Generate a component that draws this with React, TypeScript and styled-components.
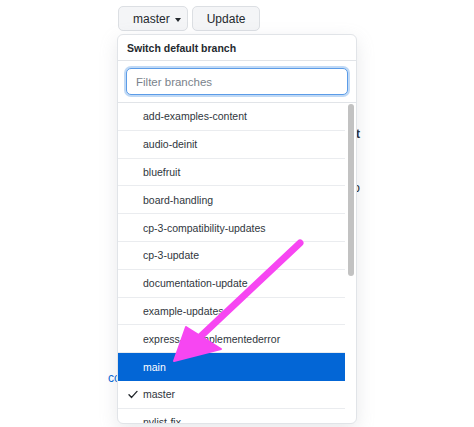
import React from "react";
import styled, { createGlobalStyle } from "styled-components";

const GlobalStyle = createGlobalStyle`
  html, body {
    margin: 0;
    padding: 0;
    background: #ffffff;
    font-family: "Liberation Sans", Arial, Helvetica, sans-serif;
    color: #24292e;
  }
  * { box-sizing: border-box; }
`;

const Page = styled.div`
  position: relative;
  width: 474px;
  height: 427px;
  overflow: hidden;
  padding-top: 6px;
  display: flex;
  flex-direction: column;
`;

const Toolbar = styled.div`
  position: relative;
  display: flex;
  gap: 4px;
  padding-left: 118px;
  z-index: 2;
`;

const MenuAnchor = styled.div`
  position: relative;
`;

const Button = styled.button`
  height: 25px;
  padding: 0 ${(p: { $right?: number }) => p.$right ?? 14}px 0 14px;
  display: inline-flex;
  align-items: center;
  gap: 5px;
  font-family: inherit;
  font-size: 12px;
  color: #24292e;
  background: #f4f5f7;
  border: 1px solid #dcdfe3;
  border-radius: 5px;
`;

const Caret = styled.span`
  width: 0;
  height: 0;
  margin-top: 2px;
  border-left: 3.5px solid transparent;
  border-right: 3.5px solid transparent;
  border-top: 4px solid #24292e;
`;

const Dropdown = styled.div`
  position: absolute;
  top: 28px;
  left: -1px;
  width: 240px;
  height: 390px;
  display: flex;
  flex-direction: column;
  background: #ffffff;
  border: 1px solid #e1e4e8;
  border-radius: 6px;
  box-shadow: 0 6px 18px rgba(149, 157, 165, 0.22);
  overflow: hidden;
`;

const Header = styled.div`
  height: 26px;
  flex: none;
  display: flex;
  align-items: center;
  padding: 0 9px;
  font-size: 10.5px;
  font-weight: 700;
  color: #24292e;
  border-bottom: 1px solid #e1e4e8;
`;

const FilterArea = styled.div`
  flex: none;
  padding: 7px 8px 7px 8px;
  border-bottom: 1px solid #e1e4e8;
`;

const FilterInput = styled.input`
  display: block;
  width: 100%;
  height: 27px;
  padding: 0 9px;
  font-family: inherit;
  font-size: 11.5px;
  color: #24292e;
  background: #ffffff;
  border: 1px solid #5b9ce8;
  border-radius: 5px;
  outline: none;
  box-shadow: 0 0 0 2px rgba(3, 102, 214, 0.25);
  &::placeholder {
    color: #7a828b;
  }
`;

const ListArea = styled.div`
  flex: 1;
  display: flex;
  min-height: 0;
  overflow: hidden;
`;

const Rows = styled.div`
  flex: 1;
  display: flex;
  flex-direction: column;
`;

const Row = styled.div<{ $selected?: boolean }>`
  flex: none;
  height: 27.8px;
  display: flex;
  align-items: center;
  font-size: 10.5px;
  color: ${(p) => (p.$selected ? "#ffffff" : "#2f363d")};
  background: ${(p) => (p.$selected ? "#0366d6" : "transparent")};
  border-bottom: 1px solid ${(p) => (p.$selected ? "#0366d6" : "#eaecef")};
`;

const CheckSlot = styled.span`
  width: 25px;
  flex: none;
  display: flex;
  align-items: center;
  padding-left: 10px;
`;

const Track = styled.div`
  width: 11px;
  flex: none;
  padding: 1px 3px 0 3px;
`;

const Thumb = styled.div`
  width: 6px;
  height: 172px;
  border-radius: 3px;
  background: #c2c2c2;
`;

const Background = styled.div`
  display: flex;
  flex-direction: column;
  padding-left: 108px;
  width: 360px;
`;

const BgHeading = styled.div<{ $top: number }>`
  margin-top: ${(p) => p.$top}px;
  text-align: right;
  font-size: 13px;
  font-weight: 700;
  color: #24292e;
  white-space: nowrap;
`;

const BgText = styled.div<{ $top: number }>`
  margin-top: ${(p) => p.$top}px;
  text-align: right;
  font-size: 13px;
  color: #24292e;
  white-space: nowrap;
`;

const BgLink = styled.div<{ $top: number }>`
  margin-top: ${(p) => p.$top}px;
  font-size: 12px;
  color: #0366d6;
  white-space: nowrap;
`;

const Annotation = styled.svg`
  position: absolute;
  left: 0;
  top: 0;
  width: 474px;
  height: 427px;
  pointer-events: none;
  z-index: 5;
`;

const CheckIcon = () => (
  <svg width="10" height="9" viewBox="0 0 10 9" fill="none">
    <path d="M1 4.8 L3.6 7.4 L9 1.4" stroke="#24292e" strokeWidth="1.4" strokeLinecap="round" strokeLinejoin="round" />
  </svg>
);

const branches = [
  "add-examples-content",
  "audio-deinit",
  "bluefruit",
  "board-handling",
  "cp-3-compatibility-updates",
  "cp-3-update",
  "documentation-update",
  "example-updates",
  "express-notimplementederror",
  "main",
  "master",
  "nvlist-fix",
];

export default function App() {
  return (
    <>
      <GlobalStyle />
      <Page>
        <Toolbar>
          <MenuAnchor>
            <Button $right={6}>
              master
              <Caret />
            </Button>
            <Dropdown>
              <Header>Switch default branch</Header>
              <FilterArea>
                <FilterInput placeholder="Filter branches" autoFocus />
              </FilterArea>
              <ListArea>
                <Rows>
                  {branches.map((b) => (
                    <Row key={b} $selected={b === "main"}>
                      <CheckSlot>{b === "master" ? <CheckIcon /> : null}</CheckSlot>
                      {b}
                    </Row>
                  ))}
                </Rows>
                <Track>
                  <Thumb />
                </Track>
              </ListArea>
            </Dropdown>
          </MenuAnchor>
          <Button>Update</Button>
        </Toolbar>
        <Background>
          <BgHeading $top={95}>Default branch protection bot</BgHeading>
          <BgText $top={39}>Choose the default branch to</BgText>
          <BgLink $top={176}>commits</BgLink>
        </Background>
        <Annotation viewBox="0 0 474 427">
          <line x1="300" y1="243" x2="200" y2="337" stroke="#f746f2" strokeWidth="7" strokeLinecap="round" />
          <polygon points="174,361 186,327 221,349" fill="#f746f2" stroke="#f746f2" strokeWidth="2" strokeLinejoin="round" />
        </Annotation>
      </Page>
    </>
  );
}
